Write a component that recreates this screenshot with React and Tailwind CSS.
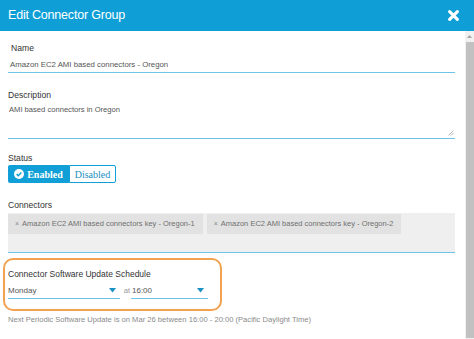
import React from "react";

const sans = { fontFamily: '"Liberation Sans", Arial, sans-serif' };

function CheckCircle() {
  return (
    <svg width="10" height="10" viewBox="0 0 16 16">
      <circle cx="8" cy="8" r="8" fill="#ffffff" />
      <path d="M4.3 8.2l2.5 2.5 5-5" fill="none" stroke="#109fd6" strokeWidth="2.4" />
    </svg>
  );
}

function Chip({ text }) {
  return (
    <div className="h-[20px] flex items-center pl-[7px] pr-[8px] bg-[#e2e2e2] text-[#707070] text-[7.5px] whitespace-nowrap">
      <span className="text-[7px] mr-[3px] text-[#888]">×</span>
      {text}
    </div>
  );
}

function Caret() {
  return (
    <svg width="7" height="5" viewBox="0 0 7 5">
      <path d="M0 0h7L3.5 4.5z" fill="#1a8fc4" />
    </svg>
  );
}

export default function App() {
  return (
    <div className="w-[474px] h-[339px] bg-white overflow-hidden flex flex-col" style={sans}>
      <div className="h-[31px] shrink-0 bg-[#0f9fd6] flex items-center justify-between pl-[8px] pr-[15px]">
        <div className="text-white text-[12.5px] tracking-[-0.2px]">Edit Connector Group</div>
        <svg width="11" height="11" viewBox="0 0 10 10">
          <path d="M1.5 1.5l7 7M8.5 1.5l-7 7" stroke="#ffffff" strokeWidth="2.8" strokeLinecap="round" />
        </svg>
      </div>

      <div className="flex-1 flex">
        <div className="flex-1 pl-[8px] pr-[10px]">
          {/* Name */}
          <div className="mt-[11px] h-[12px] flex items-center pl-[3px] text-[8.6px] text-[#333]">Name</div>
          <div className="mt-[1px] h-[18px] pl-[2px] pt-[3px] flex items-center border-b border-[#6cc5e6] text-[7.8px] text-[#555]">
            Amazon EC2 AMI based connectors - Oregon
          </div>

          {/* Description */}
          <div className="mt-[16px] h-[12px] flex items-center text-[8.6px] text-[#333]">Description</div>
          <div className="h-[38px] pt-[3px] border-b border-[#6cc5e6] text-[7.6px] text-[#555] relative">
            <div className="h-[11px] pl-[1px] flex items-center">AMI based connectors in Oregon</div>
            <svg className="absolute right-[1px] bottom-[2px]" width="6" height="6" viewBox="0 0 6 6">
              <path d="M0.5 5.5L5.5 0.5M3 5.5L5.5 3" stroke="#999" strokeWidth="0.7" />
            </svg>
          </div>

          {/* Status */}
          <div className="mt-[13px] h-[12px] flex items-center text-[8.6px] text-[#333]">Status</div>
          <div className="mt-[1px] flex h-[18px]" style={{ fontFamily: '"Liberation Serif", "Times New Roman", serif' }}>
            <div className="w-[61px] bg-[#109fd6] rounded-l-[2px] flex items-center justify-center gap-[3px] text-white text-[10px] font-bold">
              <CheckCircle />
              Enabled
            </div>
            <div className="w-[47px] border border-[#109fd6] rounded-r-[2px] flex items-center justify-center text-[#1a8fc4] text-[10px]">
              Disabled
            </div>
          </div>

          {/* Connectors */}
          <div className="mt-[16px] h-[12px] flex items-center text-[8.6px] text-[#333]">Connectors</div>
          <div className="mt-[2px] h-[40px] bg-[#efefef] border-b border-[#6cc5e6] pt-[1px] flex items-start gap-[4px]">
            <Chip text="Amazon EC2 AMI based connectors key - Oregon-1" />
            <Chip text="Amazon EC2 AMI based connectors key - Oregon-2" />
          </div>

          {/* Schedule */}
          <div className="-ml-[5px] mt-[5px] w-[219px] h-[53px] border-2 border-[#f3a251] rounded-[10px] pl-[3px] pr-[10px]">
            <div className="mt-[8px] h-[12px] flex items-center text-[8.5px] text-[#333]">Connector Software Update Schedule</div>
            <div className="mt-[3px] flex items-end">
              <div className="w-[112px] h-[16px] border-b border-[#6cc5e6] flex items-center justify-between pr-[4px] text-[8px] text-[#555]">
                Monday
                <Caret />
              </div>
              <div className="w-[11px] h-[16px] flex items-center justify-end pr-[1px] text-[7.6px] text-[#999]">at</div>
              <div className="w-[77px] h-[16px] border-b border-[#6cc5e6] flex items-center justify-between pl-[1px] pr-[4px] text-[8px] text-[#555]">
                16:00
                <Caret />
              </div>
            </div>
          </div>

          <div className="mt-[3px] h-[12px] flex items-center text-[7.6px] text-[#8a8a8a] whitespace-nowrap">
            Next Periodic Software Update is on Mar 26 between 16:00 - 20:00 (Pacific Daylight Time)
          </div>
        </div>

        {/* scrollbar */}
        <div className="w-[9px] bg-[#f1f1f1] flex flex-col items-center">
          <div className="h-[11px] flex items-center justify-center">
            <svg width="5" height="3" viewBox="0 0 5 3">
              <path d="M0 3L2.5 0L5 3z" fill="#a3a3a3" />
            </svg>
          </div>
          <div className="w-[8px] flex-1 bg-[#c1c1c1] mb-[1px]" />
        </div>
      </div>
    </div>
  );
}
